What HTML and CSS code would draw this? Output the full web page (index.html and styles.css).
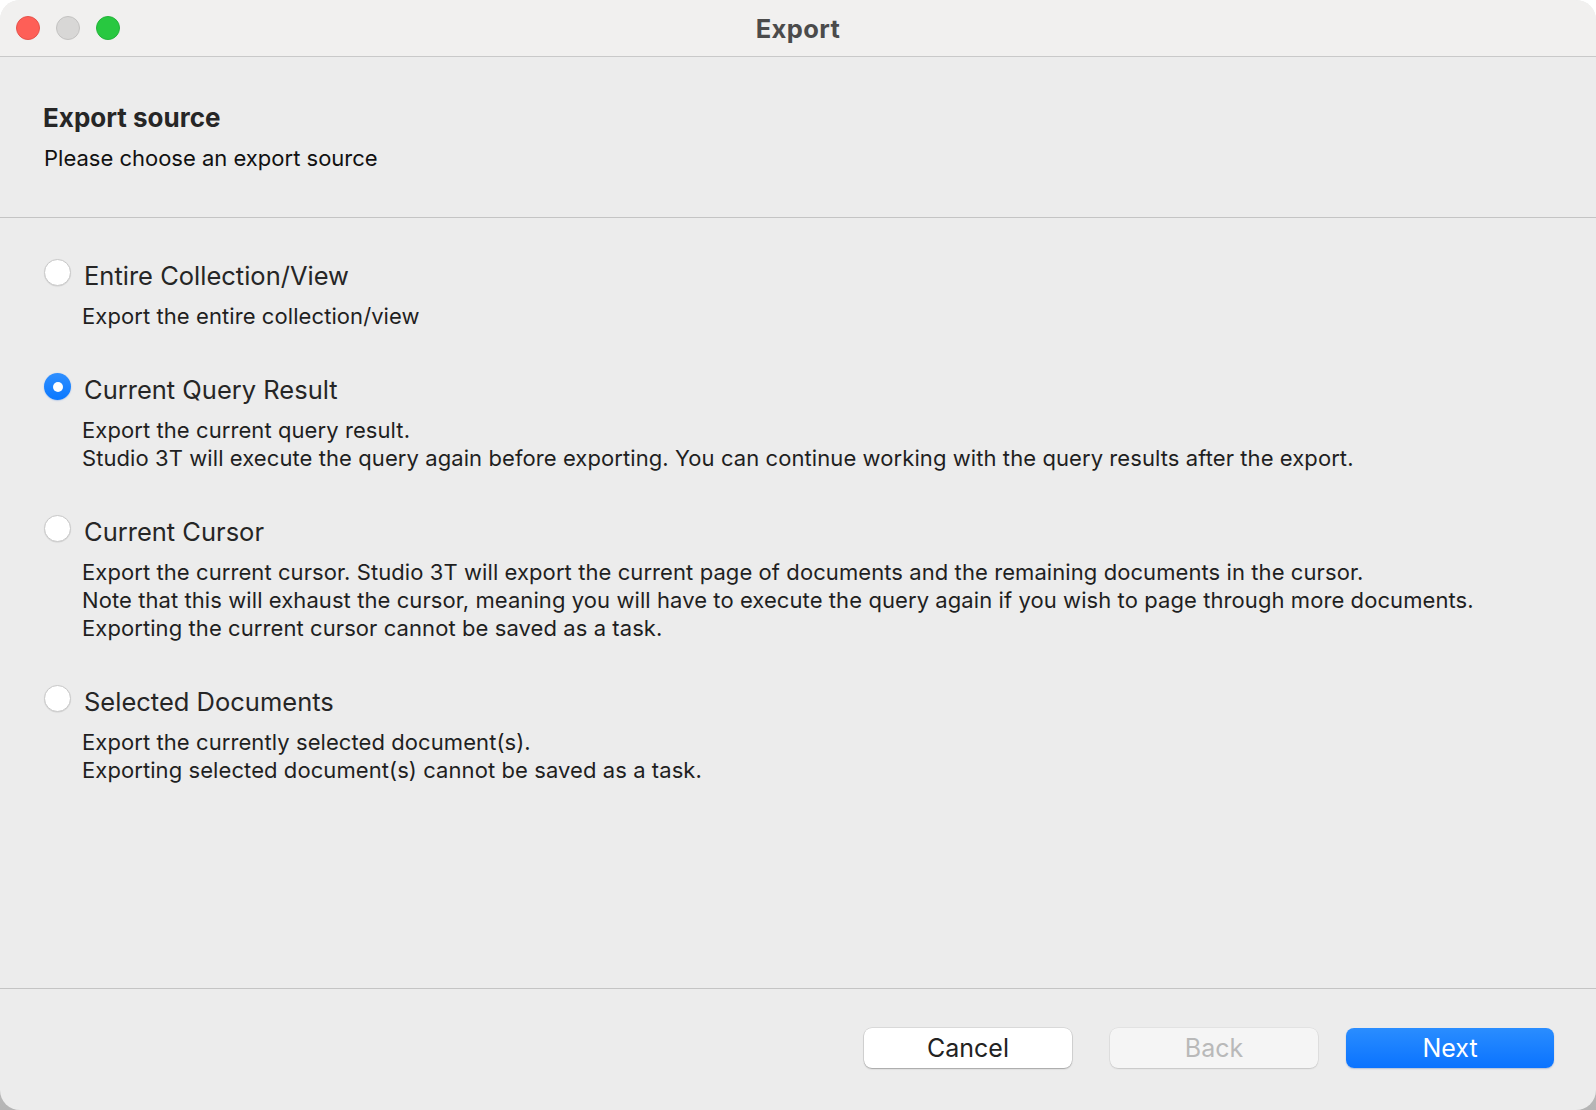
FILE: index.html
```html
<!DOCTYPE html>
<html lang="en">
<head>
<meta charset="utf-8">
<title>Export</title>
<link rel="stylesheet" href="styles.css">
</head>
<body>
<div class="window">
  <div class="titlebar">
    <div class="lights">
      <span class="light red"></span>
      <span class="light gray"></span>
      <span class="light green"></span>
    </div>
    <div class="title">Export</div>
    <div class="spacer"></div>
  </div>
  <div class="header">
    <div class="h-title">Export source</div>
    <div class="h-sub">Please choose an export source</div>
  </div>
  <div class="options">
    <div class="option">
      <div class="opt-row"><span class="radio"></span><span class="opt-label">Entire Collection/View</span></div>
      <div class="opt-desc">Export the entire collection/view</div>
    </div>
    <div class="option">
      <div class="opt-row"><span class="radio checked"></span><span class="opt-label">Current Query Result</span></div>
      <div class="opt-desc">Export the current query result.<br>Studio 3T will execute the query again before exporting. You can continue working with the query results after the export.</div>
    </div>
    <div class="option">
      <div class="opt-row"><span class="radio"></span><span class="opt-label">Current Cursor</span></div>
      <div class="opt-desc">Export the current cursor. Studio 3T will export the current page of documents and the remaining documents in the cursor.<br>Note that this will exhaust the cursor, meaning you will have to execute the query again if you wish to page through more documents.<br>Exporting the current cursor cannot be saved as a task.</div>
    </div>
    <div class="option">
      <div class="opt-row"><span class="radio"></span><span class="opt-label">Selected Documents</span></div>
      <div class="opt-desc">Export the currently selected document(s).<br>Exporting selected document(s) cannot be saved as a task.</div>
    </div>
  </div>
  <div class="footer">
    <button class="btn btn-cancel">Cancel</button>
    <button class="btn btn-back" disabled>Back</button>
    <button class="btn btn-next">Next</button>
  </div>
</div>
</body>
</html>
```
FILE: styles.css
```css
html, body {
  margin: 0;
  padding: 0;
}
body {
  width: 1596px;
  height: 1110px;
  background: linear-gradient(#ffffff, #ffffff 50%, #b5b5b5);
  font-family: Inter, "Liberation Sans", sans-serif;
  overflow: hidden;
}
.window {
  width: 1596px;
  height: 1110px;
  display: flex;
  flex-direction: column;
  background: #ececec;
  border-radius: 20px;
  overflow: hidden;
}
.titlebar {
  height: 56px;
  flex: none;
  background: #f1f0ef;
  border-bottom: 1px solid #c9c9c9;
  display: grid;
  grid-template-columns: 1fr auto 1fr;
  align-items: center;
}
.lights {
  display: flex;
  gap: 16px;
  padding-left: 16px;
}
.light {
  width: 24px;
  height: 24px;
  border-radius: 50%;
  box-sizing: border-box;
}
.red { background: #fe5f57; border: 1px solid #e5524b; }
.gray { background: #d8d7d6; border: 1px solid #c3c2c1; }
.green { background: #28c840; border: 1px solid #23b33a; }
.title {
  font-size: 25.5px;
  font-weight: 700;
  color: #4b4b4b;
  letter-spacing: 0.4px;
}
.header {
  flex: none;
  height: 115px;
  padding: 45px 0 0 43px;
  border-bottom: 1px solid #c4c4c4;
  box-sizing: content-box;
}
.h-title {
  font-size: 26px;
  font-weight: 700;
  line-height: 32px;
  color: #262626;
}
.h-sub {
  margin-top: 10px;
  font-size: 22px;
  line-height: 28px;
  color: #111;
  padding-left: 1px;
}
.options {
  flex: 1;
  padding: 42px 0 0 44px;
  display: flex;
  flex-direction: column;
  gap: 44px;
}
.opt-row {
  display: flex;
  align-items: flex-start;
  height: 32px;
}
.radio {
  width: 27px;
  height: 27px;
  box-sizing: border-box;
  border-radius: 50%;
  background: #fff;
  border: 1px solid #c9c9c9;
  box-shadow: 0 0.5px 1px rgba(0,0,0,0.12);
  margin-top: -1px;
  flex: none;
  display: flex;
  align-items: center;
  justify-content: center;
}
.radio.checked {
  border: none;
  background: linear-gradient(#2f8fff, #0a78ff);
  box-shadow: 0 0.5px 1.5px rgba(0,90,220,0.35);
}
.radio.checked::after {
  content: "";
  width: 10px;
  height: 10px;
  border-radius: 50%;
  background: #fff;
}
.opt-label {
  margin-left: 13px;
  font-size: 25.5px;
  line-height: 32px;
  color: #262626;
}
.opt-desc {
  margin-top: 10px;
  padding-left: 38px;
  font-size: 22px;
  letter-spacing: 0.08px;
  line-height: 28px;
  color: #1f1f1f;
}
.footer {
  flex: none;
  height: 122px;
  border-top: 1px solid #c4c4c4;
  display: flex;
  align-items: flex-start;
  padding: 39px 42px 0 0;
  justify-content: flex-end;
  box-sizing: border-box;
}
.btn {
  width: 208px;
  height: 40px;
  border-radius: 8px;
  font-family: Inter, "Liberation Sans", sans-serif;
  font-size: 25px;
  border: none;
  padding: 0;
}
.btn-cancel {
  background: #fff;
  color: #222;
  box-shadow: 0 0 0 0.5px rgba(0,0,0,0.15), 0 1px 1.5px rgba(0,0,0,0.25);
}
.btn-back {
  margin-left: 38px;
  background: #f5f5f5;
  color: #b9b9b9;
  box-shadow: 0 0 0 0.5px rgba(0,0,0,0.08), 0 1px 1.5px rgba(0,0,0,0.12);
}
.btn-next {
  margin-left: 28px;
  background: linear-gradient(#2a8dff, #0a73ff);
  color: #fff;
  box-shadow: 0 1px 1.5px rgba(0,60,160,0.25);
}
```
